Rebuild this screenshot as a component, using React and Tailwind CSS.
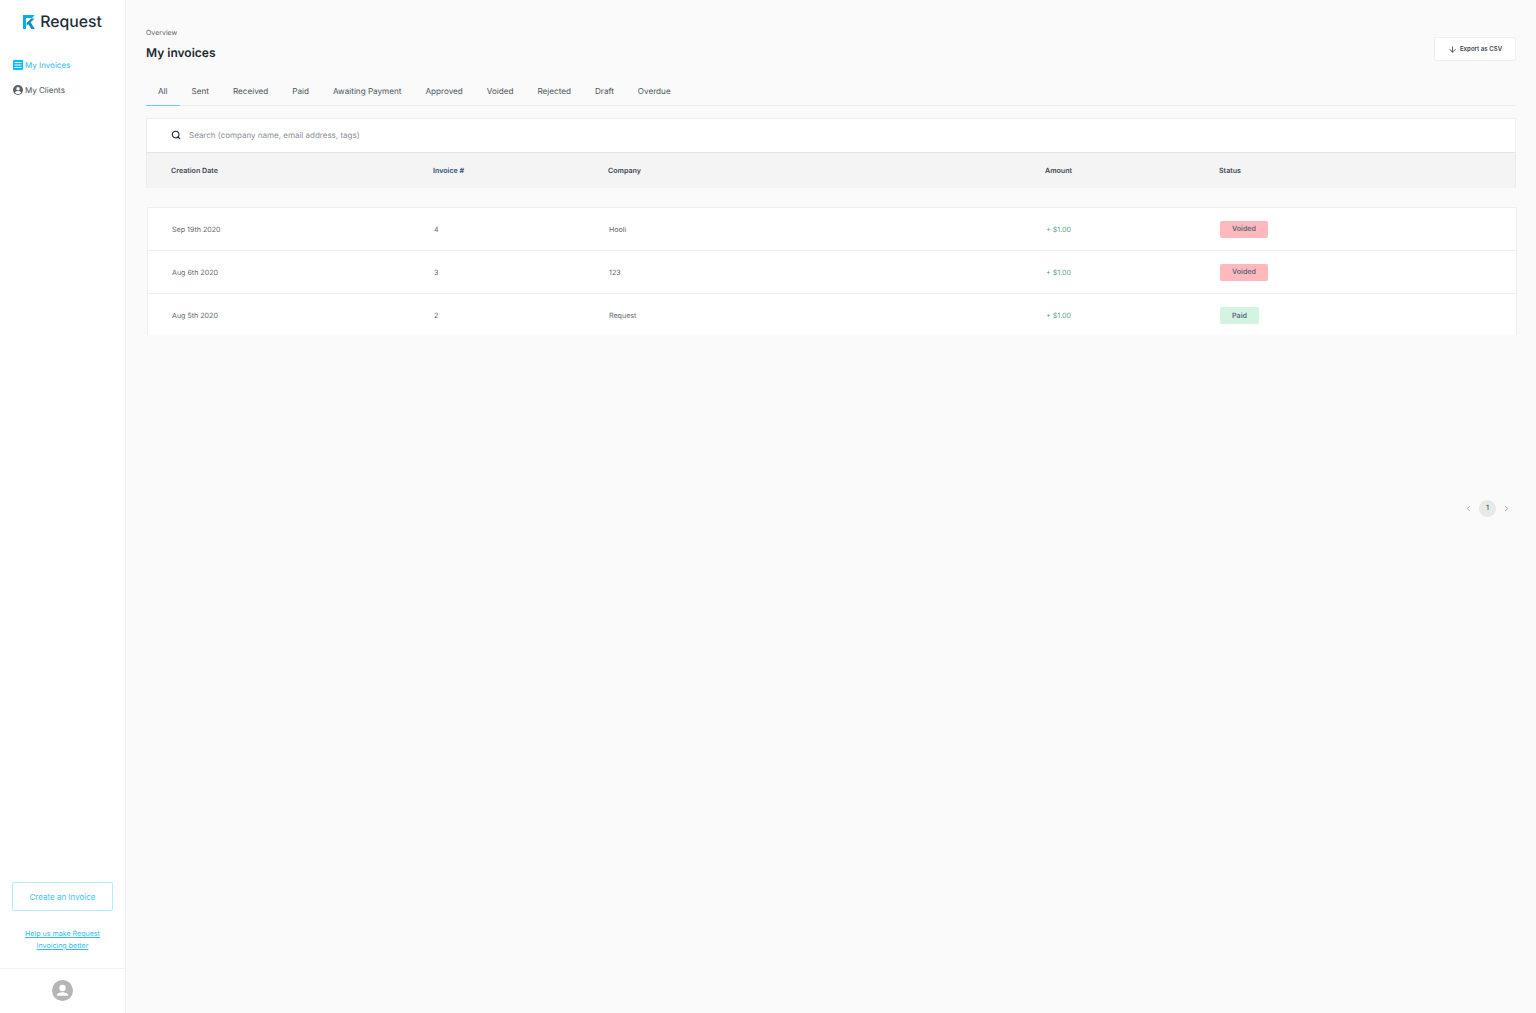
import React from "react";
import { ArrowDown, ChevronLeft, ChevronRight, Search } from "lucide-react";

const tabs = ["All", "Sent", "Received", "Paid", "Awaiting Payment", "Approved", "Voided", "Rejected", "Draft", "Overdue"];

const rows = [
  ["Sep 19th 2020", "4", "Hooli", "Voided"],
  ["Aug 6th 2020", "3", "123", "Voided"],
  ["Aug 5th 2020", "2", "Request", "Paid"],
];

const cols = "grid grid-cols-[262px_175px_437px_174px_1fr]";

function Logo() {
  return (
    <div className="flex items-center justify-center h-[44px] gap-[5px]">
      <svg width="12" height="14" viewBox="0 0 12 14" className="shrink-0">
        <path d="M0 0H11.5L9.3 3H3V14H0Z" fill="#00AFEF" />
        <path d="M3.6 8L8.4 3.6H11.6L7.6 7.3L11.8 14H8.4L5.4 9.2L3.6 10.8Z" fill="#008FC7" />
      </svg>
      <span className="text-[15.8px] leading-none font-medium text-[#1f2d3a]">Request</span>
    </div>
  );
}

function Sidebar() {
  return (
    <aside className="w-[126px] shrink-0 h-full bg-white border-r border-[#f2f2f2] flex flex-col">
      <Logo />
      <nav className="mt-[9px] pl-[13px] flex flex-col text-[8px] leading-[24.5px]">
        <a className="flex items-center gap-[2px] text-[#2fbdf0]">
          <svg width="10" height="10" viewBox="0 0 10 10" className="shrink-0">
            <rect width="10" height="10" rx="1" fill="#00BFFF" />
            <path d="M1.5 2.5H8.5M1.5 5H8.5M1.5 7.5H8.5" stroke="#fff" strokeWidth="1" />
          </svg>
          My Invoices
        </a>
        <a className="flex items-center gap-[2px] text-[#4b5560]">
          <svg width="10" height="10" viewBox="0 0 10 10" className="shrink-0">
            <circle cx="5" cy="5" r="5" fill="#5f6368" />
            <circle cx="5" cy="3.8" r="1.7" fill="#fff" />
            <path d="M1.9 7.7C2.7 6.4 3.8 6.1 5 6.1C6.2 6.1 7.3 6.4 8.1 7.7C7.3 8.6 6.2 9 5 9C3.8 9 2.7 8.6 1.9 7.7Z" fill="#fff" />
          </svg>
          My Clients
        </a>
      </nav>
      <div className="mt-auto px-[12px]">
        <button className="w-full h-[29px] rounded-[2px] border border-[#b3ecff] text-[#3cc3f2] text-[8px]">
          Create an Invoice
        </button>
        <p className="mt-[17px] text-center text-[7.1px] leading-[12px] text-[#2fbdf0] underline">
          Help us make Request
          <br />
          Invoicing better
        </p>
      </div>
      <div className="mt-[16px] h-[45px] pb-[1px] border-t border-[#f2f2f2] flex items-center justify-center">
        <svg width="21" height="21" viewBox="0 0 21 21">
          <circle cx="10.5" cy="10.5" r="10.5" fill="#b5b5b5" />
          <circle cx="10.5" cy="8" r="3.2" fill="#fff" />
          <path d="M4.8 15.8C4.8 13.2 8 12.3 10.5 12.3C13 12.3 16.2 13.2 16.2 15.8Z" fill="#fff" />
        </svg>
      </div>
    </aside>
  );
}

function Badge({ status }) {
  const voided = status === "Voided";
  return (
    <span
      className={`flex items-center justify-center h-[17px] pt-px rounded-[2px] text-[7.1px] font-semibold text-[#5b6b7c] ${
        voided ? "w-[48px] bg-[#ffb8bb]" : "w-[39px] bg-[#d3f3e3]"
      }`}
    >
      {status}
    </span>
  );
}

export default function App() {
  return (
    <div
      className="flex w-full h-[1013px] overflow-hidden bg-[#fafafa] [text-rendering:geometricPrecision]"
      style={{ fontFamily: "Inter, 'Liberation Sans', sans-serif" }}
    >
      <Sidebar />
      <main className="flex-1 min-w-0 px-[20px] flex flex-col">
        <header className="flex items-start justify-between pt-[27px] h-[80px]">
          <div>
            <p className="text-[7px] leading-[11px] text-[#5f6770]">Overview</p>
            <h1 className="mt-[7px] text-[12px] leading-[16px] font-semibold text-[#1f2933]">My invoices</h1>
          </div>
          <button className="mt-[10px] w-[82px] h-[24px] bg-white border border-[#f0f0f0] rounded-[2px] flex items-center justify-center gap-[3px] text-[6.1px] font-semibold text-[#3b4654]">
            <ArrowDown size={9} strokeWidth={2} className="text-[#26303b]" />
            Export as CSV
          </button>
        </header>

        <div className="flex h-[26px] border-b border-[#eeeeee] text-[8.15px] text-[#4b5560]">
          {tabs.map((t, i) => (
            <div
              key={t}
              className={`h-[26px] px-[12px] pb-[3px] shrink-0 flex items-center ${
                i === 0 ? "border-b border-[#5fd3f7]" : ""
              }`}
            >
              {t}
            </div>
          ))}
        </div>

        <div className="mt-[12px] h-[35px] pb-[2px] bg-white border border-[#f0f0f0] border-b-[#e4e4e4] flex items-center pl-[24px] gap-[8px]">
          <Search size={10} strokeWidth={2.6} className="text-[#1f2933]" />
          <span className="text-[8px] text-[#8a8f96]">Search (company name, email address, tags)</span>
        </div>
        <div className={`${cols} h-[35px] pt-[2px] items-center pl-[24px] bg-[#f4f4f4] border-x border-[#ececec] text-[7.1px] font-semibold text-[#3b4654]`}>
          <span>Creation Date</span>
          <span className="text-[#1f4a78]">Invoice #</span>
          <span>Company</span>
          <span>Amount</span>
          <span>Status</span>
        </div>

        <div className="mt-[19px] ml-px mr-[-1px] bg-white border-x border-t border-[#efefef]">
          {rows.map((r, i) => {
            const cell = i < 2 ? "pt-[2px]" : "pt-[1px]";
            return (
              <div
                key={i}
                className={`${cols} items-center pl-[24px] text-[7.1px] text-[#5f6770] ${
                  i < 2 ? "h-[43px] border-b border-[#efefef]" : "h-[41px] pt-[2px]"
                }`}
              >
                <span className={cell}>{r[0]}</span>
                <span className={cell}>{r[1]}</span>
                <span className={cell}>{r[2]}</span>
                <span className={`${cell} text-[#5f9e8a]`}>+ $1.00</span>
                <Badge status={r[3]} />
              </div>
            );
          })}
        </div>

        <div className="mt-[165px] flex items-center justify-end pr-[5px] gap-[6px] text-[#8f959b]">
          <ChevronLeft size={9} strokeWidth={2.2} />
          <span className="w-[17px] h-[17px] rounded-full bg-[#e8e8e8] flex items-center justify-center text-[7.1px] font-medium text-[#4b5560]">1</span>
          <ChevronRight size={9} strokeWidth={2.2} />
        </div>
      </main>
    </div>
  );
}
